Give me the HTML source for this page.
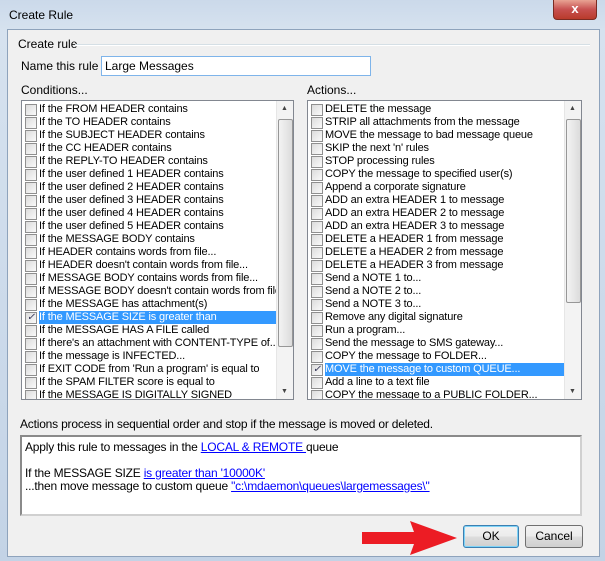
<!DOCTYPE html><html><head><style>
body{margin:0;width:605px;height:561px;overflow:hidden;background:#c9d7e6;font-family:"Liberation Sans",sans-serif;font-size:11px;color:#000;position:relative}
.a{position:absolute}
.frame{left:0;top:0;width:605px;height:561px;background:linear-gradient(180deg,#cbd9ea 0,#d6e2ef 30px,#c3d3e6 100%)}
.client{left:7px;top:29px;width:591px;height:526px;background:#f0f0f0;border:1px solid #8ea3bc}
.list{background:#fff;border:1px solid #828790;overflow:hidden;letter-spacing:-0.15px}
.row{height:13px;line-height:13px;white-space:nowrap;position:relative;padding-left:17px}
.row i{position:absolute;left:3px;top:1px;width:10px;height:10px;border:1px solid #8f8f8f;background:linear-gradient(135deg,#dcdcdc,#fafafa)}
.sel{background:#3399ff;color:#fff}
.sb{position:absolute;top:0;right:0;width:16px;bottom:0;background:#f3f3f3;border-left:1px solid #e6e6e6}
.thumb{position:absolute;left:1px;width:13px;border:1px solid #979797;border-radius:2px;background:linear-gradient(90deg,#f3f3f3,#dcdcdc)}
.btn{border:1px solid #707070;border-radius:3px;background:linear-gradient(#f2f2f2,#ebebeb 50%,#dddddd 51%,#cfcfcf);text-align:center;line-height:21px;font-size:12px}
a{color:#0000ff;text-decoration:underline}
</style></head><body>
<div class="a frame"></div>
<div class="a" style="left:9px;top:8px;font-size:12px;color:#000">Create Rule</div>
<div class="a" style="left:553px;top:0;width:42px;height:19px;background:linear-gradient(#e8a393,#c75050 50%,#b93b2b);border:1px solid #7a2b22;border-top:none;border-radius:0 0 4px 4px;color:#fff;text-align:center;font-weight:bold;font-size:13px;line-height:18px">x</div>
<div class="a client"></div>
<div class="a" style="left:18px;top:37px;font-size:12px">Create rule</div>
<div class="a" style="left:75px;top:44px;width:515px;border-top:1px solid #d5dfe5;border-bottom:1px solid #fff"></div>
<div class="a" style="left:21px;top:59px;font-size:12px">Name this rule</div>
<div class="a" style="left:101px;top:56px;width:265px;height:18px;background:#fff;border:1px solid #7eb4ea;font-size:12px;line-height:18px;padding-left:3px">Large Messages</div>
<div class="a" style="left:21px;top:83px;font-size:12px">Conditions...</div>
<div class="a" style="left:307px;top:83px;font-size:12px">Actions...</div>

<div class="a list" style="left:21px;top:100px;width:273px;height:300px;padding-top:2px;box-sizing:border-box">
<div class="row"><i></i>If the FROM HEADER contains</div>
<div class="row"><i></i>If the TO HEADER contains</div>
<div class="row"><i></i>If the SUBJECT HEADER contains</div>
<div class="row"><i></i>If the CC HEADER contains</div>
<div class="row"><i></i>If the REPLY-TO HEADER contains</div>
<div class="row"><i></i>If the user defined 1 HEADER contains</div>
<div class="row"><i></i>If the user defined 2 HEADER contains</div>
<div class="row"><i></i>If the user defined 3 HEADER contains</div>
<div class="row"><i></i>If the user defined 4 HEADER contains</div>
<div class="row"><i></i>If the user defined 5 HEADER contains</div>
<div class="row"><i></i>If the MESSAGE BODY contains</div>
<div class="row"><i></i>If HEADER contains words from file...</div>
<div class="row"><i></i>If HEADER doesn't contain words from file...</div>
<div class="row"><i></i>If MESSAGE BODY contains words from file...</div>
<div class="row"><i></i>If MESSAGE BODY doesn't contain words from file</div>
<div class="row"><i></i>If the MESSAGE has attachment(s)</div>
<div class="row"><i style="color:#335;font-size:10px;line-height:10px;text-align:center">✓</i><span class="sel" style="display:inline-block;width:240px">If the MESSAGE SIZE is greater than</span></div>
<div class="row"><i></i>If the MESSAGE HAS A FILE called</div>
<div class="row"><i></i>If there's an attachment with CONTENT-TYPE of...</div>
<div class="row"><i></i>If the message is INFECTED...</div>
<div class="row"><i></i>If EXIT CODE from 'Run a program' is equal to</div>
<div class="row"><i></i>If the SPAM FILTER score is equal to</div>
<div class="row"><i></i>If the MESSAGE IS DIGITALLY SIGNED</div>
<div class="sb"><div class="a" style="left:4px;top:4px;font-size:7px;color:#444">▲</div><div class="thumb" style="top:18px;height:226px"></div><div class="a" style="left:4px;bottom:4px;font-size:7px;color:#444">▼</div></div>
</div>

<div class="a list" style="left:307px;top:100px;width:275px;height:300px;padding-top:2px;box-sizing:border-box">
<div class="row"><i></i>DELETE the message</div>
<div class="row"><i></i>STRIP all attachments from the message</div>
<div class="row"><i></i>MOVE the message to bad message queue</div>
<div class="row"><i></i>SKIP the next 'n' rules</div>
<div class="row"><i></i>STOP processing rules</div>
<div class="row"><i></i>COPY the message to specified user(s)</div>
<div class="row"><i></i>Append a corporate signature</div>
<div class="row"><i></i>ADD an extra HEADER 1 to message</div>
<div class="row"><i></i>ADD an extra HEADER 2 to message</div>
<div class="row"><i></i>ADD an extra HEADER 3 to message</div>
<div class="row"><i></i>DELETE a HEADER 1 from message</div>
<div class="row"><i></i>DELETE a HEADER 2 from message</div>
<div class="row"><i></i>DELETE a HEADER 3 from message</div>
<div class="row"><i></i>Send a NOTE 1 to...</div>
<div class="row"><i></i>Send a NOTE 2 to...</div>
<div class="row"><i></i>Send a NOTE 3 to...</div>
<div class="row"><i></i>Remove any digital signature</div>
<div class="row"><i></i>Run a program...</div>
<div class="row"><i></i>Send the message to SMS gateway...</div>
<div class="row"><i></i>COPY the message to FOLDER...</div>
<div class="row"><i style="color:#335;font-size:10px;line-height:10px;text-align:center">✓</i><span class="sel" style="display:inline-block;width:241px">MOVE the message to custom QUEUE...</span></div>
<div class="row"><i></i>Add a line to a text file</div>
<div class="row"><i></i>COPY the message to a PUBLIC FOLDER...</div>
<div class="sb"><div class="a" style="left:4px;top:4px;font-size:7px;color:#444">▲</div><div class="thumb" style="top:18px;height:182px"></div><div class="a" style="left:4px;bottom:4px;font-size:7px;color:#444">▼</div></div>
</div>

<div class="a" style="left:20px;top:417px;font-size:12px;letter-spacing:-0.2px">Actions process in sequential order and stop if the message is moved or deleted.</div>
<div class="a" style="left:20px;top:435px;width:562px;height:81px;background:#fff;border:2px solid #8a8a8a;border-right-color:#d0d0d0;border-bottom-color:#d0d0d0;font-size:12px;line-height:13px;padding:4px 3px;box-sizing:border-box;letter-spacing:-0.2px">
Apply this rule to messages in the <a>LOCAL &amp; REMOTE </a> queue<br><br>If the MESSAGE SIZE <a>is greater than '10000K'</a><br>...then move message to custom queue <a>"c:\mdaemon\queues\largemessages\"</a></div>
<svg class="a" style="left:362px;top:521px" width="96" height="34"><polygon points="0,11 52,11 48,0 95,17 48,34 52,23 0,23" fill="#ec1c24"/></svg>
<div class="a btn" style="left:463px;top:525px;width:54px;height:21px;border-color:#3c7fb1;box-shadow:inset 0 0 0 1px #7ed3f7">OK</div>
<div class="a btn" style="left:525px;top:525px;width:56px;height:21px">Cancel</div>
</body></html>
